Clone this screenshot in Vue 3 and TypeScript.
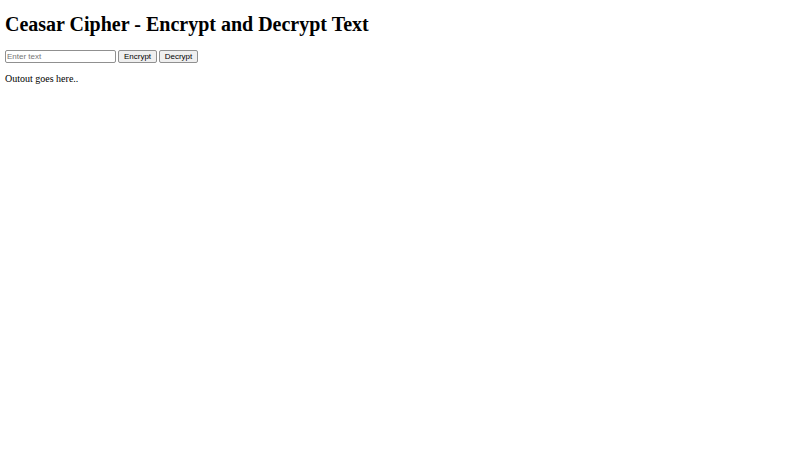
<script setup lang="ts">
import { ref } from 'vue'

const text = ref('')
const output = ref('Outout goes here..')
const SHIFT = 3

function rotate(source: string, shift: number): string {
  return source.replace(/[a-z]/gi, (char) => {
    const base = char <= 'Z' ? 65 : 97
    return String.fromCharCode(((char.charCodeAt(0) - base + shift + 26) % 26) + base)
  })
}

function encrypt() {
  output.value = rotate(text.value, SHIFT)
}

function decrypt() {
  output.value = rotate(text.value, -SHIFT)
}
</script>

<template>
  <main class="page">
    <h1 class="title">Ceasar Cipher - Encrypt and Decrypt Text</h1>
    <div class="controls">
      <input v-model="text" class="field" type="text" placeholder="Enter text" aria-label="Enter text" />
      <button class="action" type="button" @click="encrypt">Encrypt</button>
      <button class="action" type="button" @click="decrypt">Decrypt</button>
    </div>
    <p class="output">{{ output }}</p>
  </main>
</template>

<style scoped>
.page {
  padding: 13px 5px;
  font-family: "Liberation Serif", serif;
  color: #000;
}

.title {
  margin: 0;
  font-size: 20px;
  line-height: 23px;
}

.controls {
  display: flex;
  gap: 2px;
  margin-top: 14px;
}

.field,
.action {
  box-sizing: border-box;
  height: 13px;
  margin: 0;
  border: 1px solid #909090;
  border-radius: 2px;
  font-family: "Liberation Sans", sans-serif;
  font-size: 8px;
  line-height: 10px;
}

.field {
  width: 111px;
  padding: 0 1px;
}

.field::placeholder {
  color: #757575;
}

.action {
  min-width: 39px;
  padding: 0 4px;
  background: #efefef;
  color: #000;
}

.output {
  margin: 10px 0 0;
  font-size: 10px;
  line-height: 11px;
}
</style>

<style>
body {
  margin: 0;
  background: #fff;
}
</style>
